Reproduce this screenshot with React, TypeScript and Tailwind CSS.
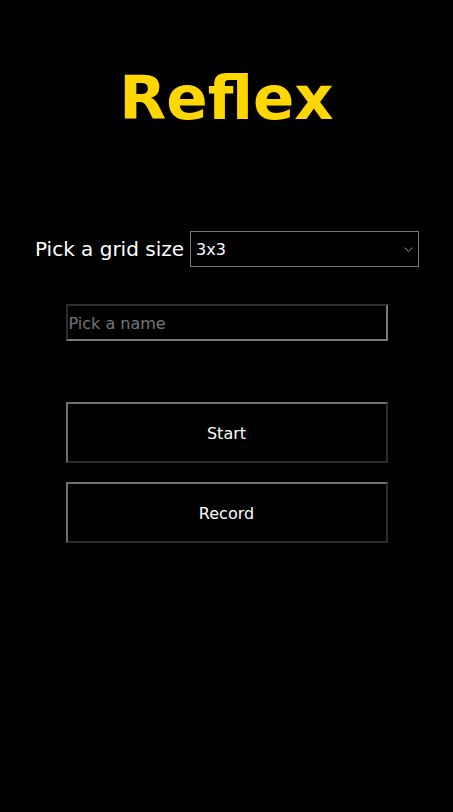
import React from 'react';

const App = () => {
  return (
    <div className="min-h-screen bg-black text-white font-['DejaVu_Sans',sans-serif] flex flex-col items-center">
      {/* Title */}
      <h1 className="mt-[63px] text-[61px] leading-[70px] font-bold text-[#ffd700]">Reflex</h1>

      {/* Grid size */}
      <div className="mt-[98px] flex items-center gap-[6px] pl-[1px]">
        <label className="text-[20px] leading-[24px]">Pick a grid size</label>
        <div className="relative">
          <select
            defaultValue="3x3"
            className="appearance-none w-[229px] h-[36px] bg-black text-white text-[16px] pl-[5px] pt-[1px] border border-[#767676] outline-none"
          >
            <option>3x3</option>
            <option>4x4</option>
            <option>5x5</option>
          </select>
          {/* chevron */}
          <svg className="absolute right-[6px] top-[16px] pointer-events-none" width="9" height="5" viewBox="0 0 9 5">
            <path d="M0.5 0.5 L4.5 4.5 L8.5 0.5" fill="none" stroke="#8a8a8a" strokeWidth="1" />
          </svg>
        </div>
      </div>

      {/* Name */}
      <input
        placeholder="Pick a name"
        className="mt-[37px] w-[322px] h-[37px] bg-black text-white text-[16px] px-[1px] pt-[1px] border-2 border-t-[#2e2e2e] border-l-[#2e2e2e] border-b-[#7a7a7a] border-r-[#7a7a7a] placeholder:text-[#757575] outline-none"
      />

      {/* Buttons */}
      <div className="mt-[61px] flex flex-col gap-[19px]">
        {['Start', 'Record'].map((label) => (
          <button
            key={label}
            className="w-[322px] h-[61px] bg-black text-white text-[16px] pt-[3px] border-2 border-t-[#6e6e6e] border-l-[#6e6e6e] border-b-[#2b2b2b] border-r-[#2b2b2b]"
          >
            {label}
          </button>
        ))}
      </div>
    </div>
  );
};

export default App;
